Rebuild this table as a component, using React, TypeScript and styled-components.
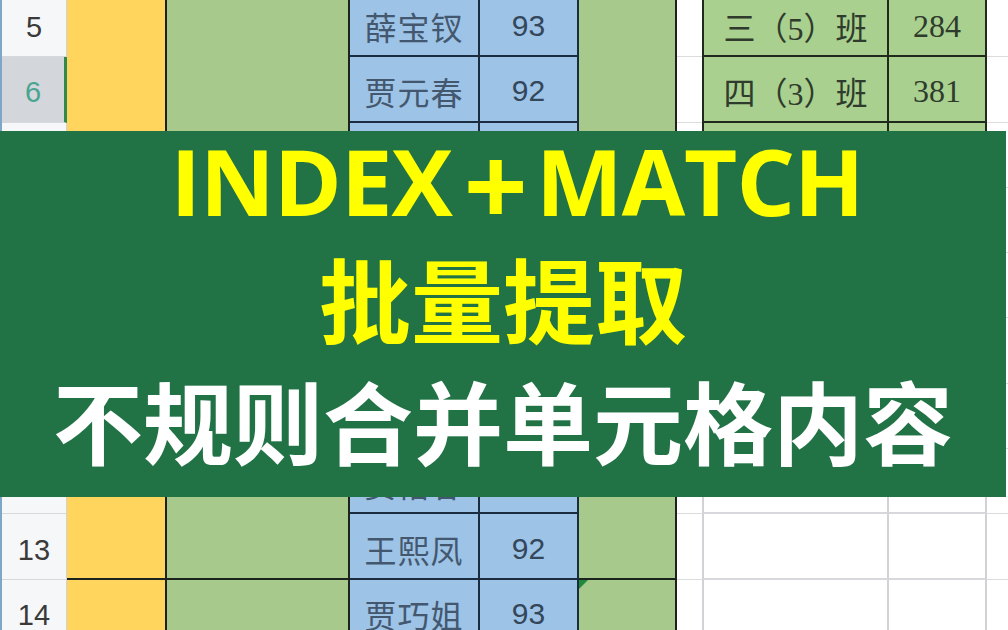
import React from 'react';
import styled, { createGlobalStyle } from 'styled-components';

const Global = createGlobalStyle`
  html, body { margin: 0; padding: 0; background: #ffffff; }
  body {
    width: 1008px;
    height: 630px;
    overflow: hidden;
    font-family: "Liberation Sans", "Noto Sans CJK SC", sans-serif;
  }
`;

const Frame = styled.div`
  position: relative;
  width: 1008px;
  height: 630px;
  overflow: hidden;
  background: #ffffff;
`;

const Sheet = styled.div`
  display: grid;
  grid-template-columns: 65px 100px 183px 130px 99px 98px 25px 187px 98px 23px;
  grid-template-rows: repeat(10, 65.3px);
  margin-top: -8px;
  border-left: 2px solid #7ea6c6;
  box-sizing: border-box;
  width: 1008px;
`;

type Pos = { $row: number; $span?: number };

const place = ({ $row, $span = 1 }: Pos) => `grid-row: ${$row} / span ${$span};`;

const RowHead = styled.div<Pos & { $selected?: boolean }>`
  ${place};
  grid-column: 1;
  box-sizing: border-box;
  display: flex;
  align-items: center;
  justify-content: center;
  padding-top: 7px;
  font-family: "Liberation Sans", Arial, sans-serif;
  font-size: 29px;
  color: ${(p) => (p.$selected ? '#4aa58f' : '#3a3a3a')};
  background: ${(p) => (p.$selected ? '#d3d6db' : '#f6f7f9')};
  border-bottom: 1px solid #d6d8dc;
  border-right: ${(p) => (p.$selected ? '3px solid #2f8a50' : '1px solid #d0d2d6')};
`;

const Merged = styled.div<Pos & { $col: number; $fill: string }>`
  ${place};
  grid-column: ${(p) => p.$col};
  box-sizing: border-box;
  background: ${(p) => p.$fill};
  border-right: 2px solid #1c231c;
  border-bottom: 2px solid #1c231c;
`;

const TableCell = styled.div<Pos & { $col: number }>`
  ${place};
  grid-column: ${(p) => p.$col};
  box-sizing: border-box;
  display: flex;
  align-items: center;
  justify-content: center;
  padding-top: 5px;
  background: #9dc3e6;
  color: #34465a;
  border-right: 2px solid #1b2c40;
  border-bottom: 2px solid #1b2c40;
`;

const NameText = styled.span`
  font-family: "Noto Sans CJK SC", sans-serif;
  font-size: 32px;
  letter-spacing: 1px;
  font-weight: 400;
  opacity: 0.85;
`;

const ScoreText = styled.span`
  font-family: "Liberation Sans", Arial, sans-serif;
  font-size: 30px;
`;

const ErrorCell = styled(Merged)`
  position: relative;
  &::before {
    content: '';
    position: absolute;
    left: 0;
    top: 0;
    width: 0;
    height: 0;
    border-top: 9px solid #1f8a3a;
    border-right: 9px solid transparent;
  }
`;

const Spacer = styled.div<Pos & { $col: number }>`
  ${place};
  grid-column: ${(p) => p.$col};
  box-sizing: border-box;
  background: #ffffff;
  border-bottom: 1px solid #dcdcdc;
`;

const ClassCell = styled.div<Pos & { $col: number; $filled: boolean; $first?: boolean }>`
  ${place};
  grid-column: ${(p) => p.$col};
  box-sizing: border-box;
  display: flex;
  align-items: center;
  justify-content: center;
  padding-top: 5px;
  font-family: "Liberation Serif", "Noto Sans CJK SC", serif;
  font-size: 32px;
  color: #2f3b2c;
  background: ${(p) => (p.$filled ? '#a9d08e' : '#ffffff')};
  border-left: ${(p) => (p.$first ? (p.$filled ? '2px solid #1f2a1c' : '2px solid #d2d2d6') : 'none')};
  border-right: ${(p) => (p.$filled ? '2px solid #1f2a1c' : '2px solid #d2d2d6')};
  border-bottom: ${(p) => (p.$filled ? '2px solid #1f2a1c' : '2px solid #d8d8dc')};
`;

const Banner = styled.div`
  position: absolute;
  top: 131px;
  left: 0;
  width: 1006px;
  height: 366px;
  box-sizing: border-box;
  padding-top: 4px;
  background: #217346;
  display: flex;
  flex-direction: column;
  align-items: center;
`;

const TitleLatin = styled.div`
  font-family: "Open Sans", "Noto Sans CJK SC", sans-serif;
  font-weight: 700;
  font-size: 92px;
  line-height: 92px;
  letter-spacing: -1px;
  color: #ffff00;
  white-space: nowrap;
  padding-left: 28px;
`;

const Plus = styled.span`
  font-size: 112px;
  line-height: 0;
  vertical-align: -10px;
  margin: 0 9px 0 12px;
`;

const TitleCjk = styled.div<{ $color: string; $size: number; $gap: number }>`
  font-family: "Noto Sans CJK SC", sans-serif;
  font-weight: 700;
  font-size: ${(p) => p.$size}px;
  line-height: ${(p) => p.$size}px;
  margin-top: ${(p) => p.$gap}px;
  color: ${(p) => p.$color};
  white-space: nowrap;
`;

const students = [
  { row: 5, name: '薛宝钗', score: 93 },
  { row: 6, name: '贾元春', score: 92 },
  { row: 7, name: '贾探春', score: 94 },
  { row: 8, name: '史湘云', score: 90 },
  { row: 9, name: '林黛玉', score: 95 },
  { row: 10, name: '贾迎春', score: 89 },
  { row: 11, name: '秦可卿', score: 91 },
  { row: 12, name: '贾惜春', score: 90 },
  { row: 13, name: '王熙凤', score: 92 },
  { row: 14, name: '贾巧姐', score: 93 },
];

const classes: Record<number, [string, number]> = {
  5: ['三（5）班', 284],
  6: ['四（3）班', 381],
  7: ['五（1）班', 276],
  8: ['五（2）班', 190],
  9: ['六（4）班', 372],
  10: ['六（5）班', 181],
};

export default function App() {
  return (
    <Frame>
      <Global />
      <Sheet>
        {students.map((s, i) => (
          <RowHead key={`h${s.row}`} $row={i + 1} $selected={s.row === 6}>
            {s.row}
          </RowHead>
        ))}
        <Merged $col={2} $row={1} $span={9} $fill="#ffd55e" />
        <Merged $col={2} $row={10} $fill="#ffd55e" />
        <Merged $col={3} $row={1} $span={9} $fill="#a8c98c" />
        <Merged $col={3} $row={10} $fill="#a8c98c" />
        {students.map((s, i) => (
          <React.Fragment key={`s${s.row}`}>
            <TableCell $col={4} $row={i + 1}>
              <NameText>{s.name}</NameText>
            </TableCell>
            <TableCell $col={5} $row={i + 1}>
              <ScoreText>{s.score}</ScoreText>
            </TableCell>
          </React.Fragment>
        ))}
        <Merged $col={6} $row={1} $span={9} $fill="#a8c98c" />
        <ErrorCell $col={6} $row={10} $fill="#a8c98c" />
        {students.map((s, i) => {
          const c = classes[s.row];
          const filled = Boolean(c);
          return (
            <React.Fragment key={`c${s.row}`}>
              <Spacer $col={7} $row={i + 1} />
              <ClassCell $col={8} $row={i + 1} $filled={filled} $first>
                {c ? c[0] : ''}
              </ClassCell>
              <ClassCell $col={9} $row={i + 1} $filled={filled}>
                {c ? c[1] : ''}
              </ClassCell>
              <Spacer $col={10} $row={i + 1} />
            </React.Fragment>
          );
        })}
      </Sheet>
      <Banner>
        <TitleLatin>
          INDEX<Plus>+</Plus>MATCH
        </TitleLatin>
        <TitleCjk $color="#ffff00" $size={92} $gap={24}>
          批量提取
        </TitleCjk>
        <TitleCjk $color="#ffffff" $size={90} $gap={31}>
          不规则合并单元格内容
        </TitleCjk>
      </Banner>
    </Frame>
  );
}
